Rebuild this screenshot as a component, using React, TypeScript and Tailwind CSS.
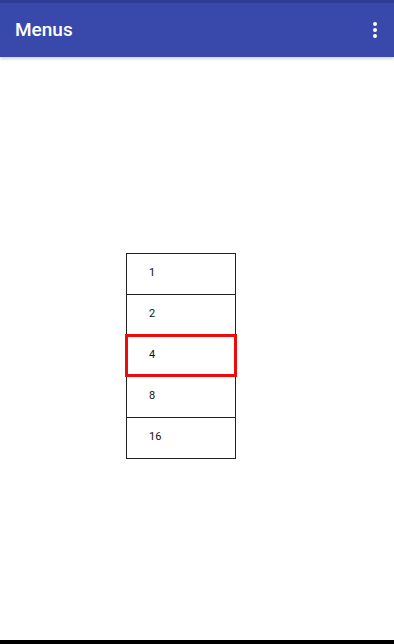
const values = [1, 2, 4, 8, 16];

export default function App() {
  const selected = 4;

  return (
    <div className="flex h-[644px] w-[394px] flex-col bg-white font-['Roboto',sans-serif]">
      <div className="h-[3px] bg-[#2f3d98]" />
      <header className="relative z-10 flex h-[54px] items-center justify-between bg-[#3949ab] pl-[15px] pr-[17px] shadow-[0_2px_3px_rgba(0,0,0,0.18)]">
        <h1 className="text-[19px] font-medium text-white">Menus</h1>
        <div className="flex flex-col gap-[2px]">
          <span className="h-[4px] w-[4px] rounded-full bg-white" />
          <span className="h-[4px] w-[4px] rounded-full bg-white" />
          <span className="h-[4px] w-[4px] rounded-full bg-white" />
        </div>
      </header>

      <main className="flex flex-1 items-start pt-[196px] pl-[126px]">
        <div className="w-[110px] border-t border-l border-r border-[#222]">
          {values.map((value) => (
            <div key={value} className="relative flex h-[41px] items-center border-b border-[#222] pl-[22px] pb-[2px]">
              <span className="text-[11px] text-[#111]">{value}</span>
              {value === selected && (
                <div className="absolute -left-[2px] -right-[2px] -top-[2px] bottom-[-1px] border-[3px] border-[#ee0b0b]" />
              )}
            </div>
          ))}
        </div>
      </main>

      <div className="h-[4px] bg-black" />
    </div>
  );
}
